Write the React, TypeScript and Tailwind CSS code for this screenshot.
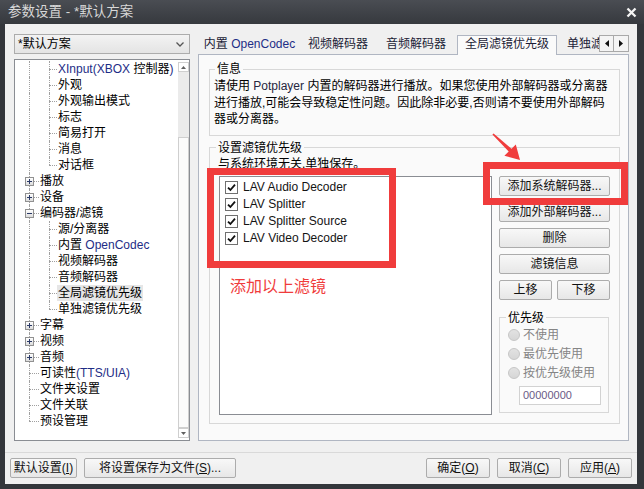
import React from 'react';

const FONT = "font-['Liberation_Sans','Noto_Sans_CJK_SC',sans-serif]";

type Row = {
  t: React.ReactNode;
  lv: 1 | 2;
  box?: '+' | '-';
  last?: boolean;
  lastTop?: boolean;
  sel?: boolean;
};

const Latin = ({ children }: { children: React.ReactNode }) => (
  <span className="text-[#1e2d86]">{children}</span>
);

const rows: Row[] = [
  { t: <><Latin>XInput(XBOX</Latin> 控制器<Latin>)</Latin></>, lv: 2 },
  { t: '外观', lv: 2 },
  { t: '外观输出模式', lv: 2 },
  { t: '标志', lv: 2 },
  { t: '简易打开', lv: 2 },
  { t: '消息', lv: 2 },
  { t: '对话框', lv: 2, last: true },
  { t: '播放', lv: 1, box: '+' },
  { t: '设备', lv: 1, box: '+' },
  { t: '编码器/滤镜', lv: 1, box: '-' },
  { t: '源/分离器', lv: 2 },
  { t: <>内置 <Latin>OpenCodec</Latin></>, lv: 2 },
  { t: '视频解码器', lv: 2 },
  { t: '音频解码器', lv: 2 },
  { t: '全局滤镜优先级', lv: 2, sel: true },
  { t: '单独滤镜优先级', lv: 2, last: true },
  { t: '字幕', lv: 1, box: '+' },
  { t: '视频', lv: 1, box: '+' },
  { t: '音频', lv: 1, box: '+' },
  { t: <>可读性<Latin>(TTS/UIA)</Latin></>, lv: 1 },
  { t: '文件夹设置', lv: 1 },
  { t: '文件关联', lv: 1 },
  { t: '预设管理', lv: 1, lastTop: true },
];

const filters = ['LAV Audio Decoder', 'LAV Splitter', 'LAV Splitter Source', 'LAV Video Decoder'];

function Btn({ children, className = '' }: { children: React.ReactNode; className?: string }) {
  return (
    <div
      className={`flex items-center justify-center h-[20px] border border-[#acacac] rounded-[2px] bg-linear-to-b from-[#f8f8f8] to-[#e7e7e7] text-[12px] leading-[16px] text-[#111] whitespace-nowrap ${className}`}
    >
      {children}
    </div>
  );
}

function TreeRow({ r }: { r: Row }) {
  return (
    <div className="relative h-[16px] leading-[16px] whitespace-nowrap">
      <span
        className={`absolute left-[14px] top-0 border-l border-dotted border-[#a0a0a0] ${r.lastTop ? 'h-[8px]' : 'h-[16px]'}`}
      />
      {r.lv === 1 ? (
        <>
          <span className="absolute left-[14px] top-[8px] w-[10px] border-t border-dotted border-[#a0a0a0]" />
          {r.box && (
            <span className="absolute left-[10px] top-[4px] w-[9px] h-[9px] border border-[#919191] bg-linear-to-b from-white to-[#dcdcdc]">
              <span className="absolute left-[1px] top-[3px] w-[5px] h-px bg-[#2b3a67]" />
              {r.box === '+' && <span className="absolute left-[3px] top-[1px] w-px h-[5px] bg-[#2b3a67]" />}
            </span>
          )}
          <div className="pl-[25px]">{r.t}</div>
        </>
      ) : (
        <>
          <span
            className={`absolute left-[34px] top-0 border-l border-dotted border-[#a0a0a0] ${r.last ? 'h-[8px]' : 'h-[16px]'}`}
          />
          <span className="absolute left-[34px] top-[8px] w-[8px] border-t border-dotted border-[#a0a0a0]" />
          <div className="pl-[42px]">
            <span className={`px-[1px] inline-block h-[16px] ${r.sel ? 'bg-[#e6e6e6]' : ''}`}>{r.t}</span>
          </div>
        </>
      )}
    </div>
  );
}

function Check() {
  return (
    <span className="w-[13px] h-[13px] border border-[#707070] bg-white flex items-center justify-center shrink-0">
      <svg width="9" height="9" viewBox="0 0 9 9">
        <path d="M1 4.6 L3.4 7 L8 1.6" fill="none" stroke="#111" strokeWidth="1.8" />
      </svg>
    </span>
  );
}

function Radio({ label }: { label: string }) {
  return (
    <div className="h-[19px] flex items-center gap-[3px] text-[#858585]">
      <span className="w-[12px] h-[12px] rounded-full border border-[#c6c6c6] bg-linear-to-b from-[#e2e2e2] to-[#d6d6d6]" />
      <span>{label}</span>
    </div>
  );
}

export default function App() {
  return (
    <div className={`relative w-[644px] h-[489px] flex flex-col bg-[#33363b] ${FONT} text-[12px] leading-[16px] text-black`}>
      {/* title bar */}
      <div className="h-[24px] shrink-0 flex items-center justify-between pl-[8px] pr-[7px] bg-linear-to-b from-[#4a4d53] to-[#36393e]">
        <span className="text-[13.5px] text-[#d8d8d8]">参数设置 - *默认方案</span>
        <svg width="11" height="11" viewBox="0 0 11 11">
          <path d="M1.5 1.5 L9.5 9.5 M9.5 1.5 L1.5 9.5" stroke="#f4f4f4" strokeWidth="2.3" />
        </svg>
      </div>

      {/* client */}
      <div className="flex-1 ml-[5px] mr-[7px] mb-[5px] bg-[#f0f0f0] flex flex-col">
        <div className="flex pt-[10px] pl-[9px] pr-[8px] gap-[8px] h-[417px]">
          {/* left column */}
          <div className="w-[176px] flex flex-col">
            <div className="h-[20px] flex items-center justify-between pl-[3px] pr-[5px] border border-[#acacac] bg-linear-to-b from-[#f3f3f3] to-[#e4e4e4]">
              <span>*默认方案</span>
              <svg width="8" height="5" viewBox="0 0 8 5">
                <path d="M0.5 0.5 L4 4 L7.5 0.5" fill="none" stroke="#555" strokeWidth="1.3" />
              </svg>
            </div>
            <div className="mt-[5px] h-[382px] flex border border-[#8a8d93] bg-white">
              <div className="flex-1 pt-[1px] overflow-hidden">
                {rows.map((r, i) => (
                  <TreeRow key={i} r={r} />
                ))}
              </div>
              <div className="w-[11px] flex flex-col py-[2px]">
                <div className="h-[10px] border border-[#cfcfcf] bg-white flex items-center justify-center">
                  <svg width="5" height="3" viewBox="0 0 5 3"><path d="M0 3 L2.5 0 L5 3Z" fill="#606060" /></svg>
                </div>
                <div className="h-[65px] bg-[#ebebeb]" />
                <div className="flex-1 border border-[#cfcfcf] bg-[#fbfbfb]" />
                <div className="h-[10px] border border-[#cfcfcf] bg-white flex items-center justify-center">
                  <svg width="5" height="3" viewBox="0 0 5 3"><path d="M0 0 L2.5 3 L5 0Z" fill="#606060" /></svg>
                </div>
              </div>
            </div>
          </div>

          {/* right column */}
          <div className="flex-1 flex flex-col">
            <div className="h-[20px] flex relative z-10 text-[#1c1c36] whitespace-nowrap">
              <div className="w-[103px] pt-[2px] text-center">
                内置 <Latin>OpenCodec</Latin>
              </div>
              <div className="w-[74px] pt-[2px] text-center">视频解码器</div>
              <div className="w-[82px] pt-[2px] text-center">音频解码器</div>
              <div className="w-[100px] mt-[1px] h-[20px] border-x border-t border-[#b0b6c2] bg-[#fafafa] text-center">
                全局滤镜优先级
              </div>
              <div className="w-[42px] pt-[2px] pl-[10px] overflow-hidden">单独滤镜优先级</div>
              <div className="w-[30px] mt-[1px] h-[17px] flex">
                <div className="w-[15px] border border-[#a9a9a9] bg-[#f4f4f4] flex items-center justify-center">
                  <svg width="4" height="7" viewBox="0 0 4 7"><path d="M4 0 L0 3.5 L4 7Z" fill="#111" /></svg>
                </div>
                <div className="w-[15px] border border-l-0 border-[#a9a9a9] bg-[#f4f4f4] flex items-center justify-center">
                  <svg width="4" height="7" viewBox="0 0 4 7"><path d="M0 0 L4 3.5 L0 7Z" fill="#111" /></svg>
                </div>
              </div>
            </div>

            <div className="h-[387px] border border-[#b0b6c2] bg-[#fafafa] flex flex-col">
              {/* 信息 */}
              <fieldset className="mt-[6px] ml-[10px] mr-[8px] border border-[#d8d8d8]">
                <legend className="ml-[5px] px-[2px] leading-[16px]">信息</legend>
                <div className="pl-[4px] pt-[1px] pb-[7px] leading-[16.5px] whitespace-nowrap">
                  <div>
                    请使用 <span className="text-[#262640]">Potplayer</span> 内置的解码器进行播放。如果您使用外部解码器或分离器
                  </div>
                  <div>进行播放,可能会导致稳定性问题。因此除非必要,否则请不要使用外部解码</div>
                  <div>器或分离器。</div>
                </div>
              </fieldset>

              {/* 设置滤镜优先级 */}
              <fieldset className="mt-[4px] ml-[10px] mr-[8px] border border-[#d8d8d8]">
                <legend className="ml-[6px] px-[2px] leading-[16px]">设置滤镜优先级</legend>
                <div className="pl-[8px] whitespace-nowrap">与系统环境无关,单独保存。</div>
                <div className="mt-[4px] pl-[9px] pr-[9px] pb-[8px] flex gap-[7px]">
                  <div className="flex-1 h-[239px] border border-[#8a8d93] bg-white pt-[2px] pl-[5px]">
                    {filters.map((f) => (
                      <div key={f} className="h-[17px] flex items-center gap-[5px]">
                        <Check />
                        <span className="text-[#141414]">{f}</span>
                      </div>
                    ))}
                  </div>
                  <div className="w-[111px] flex flex-col gap-[6px]">
                    <Btn>添加系统解码器...</Btn>
                    <Btn>添加外部解码器...</Btn>
                    <Btn>删除</Btn>
                    <Btn>滤镜信息</Btn>
                    <div className="flex gap-[5px]">
                      <Btn className="flex-1">上移</Btn>
                      <Btn className="flex-1">下移</Btn>
                    </div>
                    <fieldset className="mt-[4px] mr-[1px] border border-[#d8d8d8]">
                      <legend className="ml-[6px] px-[2px] leading-[16px]">优先级</legend>
                      <div className="pl-[8px] pb-[7px]">
                        <Radio label="不使用" />
                        <Radio label="最优先使用" />
                        <Radio label="按优先级使用" />
                        <div className="mt-[3px] ml-[11px] w-[82px] h-[19px] border border-[#d2d2d2] bg-white pl-[3px] flex items-center text-[11px] text-[#6a5a86]">
                          00000000
                        </div>
                      </div>
                    </fieldset>
                  </div>
                </div>
              </fieldset>
            </div>
          </div>
        </div>

        {/* bottom buttons */}
        <div className="mt-[11px] border-t border-[#d9d9d9] pt-[5px] px-[5px] flex gap-[7px]">
          <Btn className="w-[67px]">
            默认设置(<span className="underline">I</span>)
          </Btn>
          <Btn className="w-[152px]">
            将设置保存为文件(<span className="underline">S</span>)...
          </Btn>
          <div className="flex-1" />
          <Btn className="w-[64px]">
            确定(<span className="underline">O</span>)
          </Btn>
          <Btn className="w-[64px]">
            取消(<span className="underline">C</span>)
          </Btn>
          <Btn className="w-[64px]">
            应用(<span className="underline">A</span>)
          </Btn>
        </div>
      </div>

      {/* red annotations */}
      <div className="absolute left-[207px] top-[168px] w-[189px] h-[100px] border-[7px] border-[#f03c3c]" />
      <div className="absolute left-[483px] top-[162px] w-[145px] h-[43px] border-[7px] border-[#f03c3c]" />
      <div className="absolute left-[230px] top-[277px] text-[16px] leading-[16px] text-[#f03c3c] font-['Noto_Sans_CJK_SC',sans-serif]">
        添加以上滤镜
      </div>
      <svg className="absolute left-[488px] top-[128px]" width="36" height="36" viewBox="0 0 36 36">
        <polygon
          points="5.6,5.4 23.5,20.7 27.8,16.4 32,32 16.4,27.8 20.7,23.5 4.4,6.6"
          fill="#f03c3c"
        />
      </svg>
    </div>
  );
}
